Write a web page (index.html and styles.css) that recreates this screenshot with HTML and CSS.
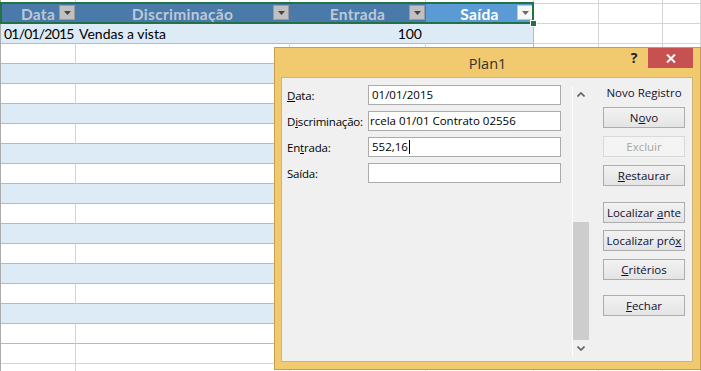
FILE: index.html
```html
<!DOCTYPE html>
<html lang="pt">
<head>
<meta charset="utf-8">
<title>Plan1</title>
<link rel="stylesheet" href="styles.css">
</head>
<body>
<div class="sheet">
  <div class="row strip"><div class="c"></div><div class="c"></div><div class="c"></div><div class="c"></div><div class="c"></div><div class="c"></div><div class="c"></div></div>
  <div class="row head">
    <div class="c h"><span class="ht">Data</span><span class="dd"><svg width="7" height="4" viewBox="0 0 7 4"><polygon points="0,0 7,0 3.5,4"/></svg></span></div>
    <div class="c h"><span class="ht">Discriminação</span><span class="dd"><svg width="7" height="4" viewBox="0 0 7 4"><polygon points="0,0 7,0 3.5,4"/></svg></span></div>
    <div class="c h"><span class="ht">Entrada</span><span class="dd"><svg width="7" height="4" viewBox="0 0 7 4"><polygon points="0,0 7,0 3.5,4"/></svg></span></div>
    <div class="c h act"><span class="ht">Saída</span><span class="dd"><svg width="7" height="4" viewBox="0 0 7 4"><polygon points="0,0 7,0 3.5,4"/></svg></span></div>
    <div class="c"></div><div class="c"></div><div class="c"></div>
  </div>
  <div class="row tb band"><div class="c txt date">01/01/2015</div><div class="c txt">Vendas a vista</div><div class="c txt num">100</div><div class="c"></div><div class="c"></div><div class="c"></div><div class="c"></div></div>
  <div class="row tb"><div class="c"></div><div class="c"></div><div class="c"></div><div class="c"></div><div class="c"></div><div class="c"></div><div class="c"></div></div>
  <div class="row tb band"><div class="c"></div><div class="c"></div><div class="c"></div><div class="c"></div><div class="c"></div><div class="c"></div><div class="c"></div></div>
  <div class="row tb"><div class="c"></div><div class="c"></div><div class="c"></div><div class="c"></div><div class="c"></div><div class="c"></div><div class="c"></div></div>
  <div class="row tb band"><div class="c"></div><div class="c"></div><div class="c"></div><div class="c"></div><div class="c"></div><div class="c"></div><div class="c"></div></div>
  <div class="row tb"><div class="c"></div><div class="c"></div><div class="c"></div><div class="c"></div><div class="c"></div><div class="c"></div><div class="c"></div></div>
  <div class="row tb band"><div class="c"></div><div class="c"></div><div class="c"></div><div class="c"></div><div class="c"></div><div class="c"></div><div class="c"></div></div>
  <div class="row tb"><div class="c"></div><div class="c"></div><div class="c"></div><div class="c"></div><div class="c"></div><div class="c"></div><div class="c"></div></div>
  <div class="row tb band"><div class="c"></div><div class="c"></div><div class="c"></div><div class="c"></div><div class="c"></div><div class="c"></div><div class="c"></div></div>
  <div class="row tb"><div class="c"></div><div class="c"></div><div class="c"></div><div class="c"></div><div class="c"></div><div class="c"></div><div class="c"></div></div>
  <div class="row tb band"><div class="c"></div><div class="c"></div><div class="c"></div><div class="c"></div><div class="c"></div><div class="c"></div><div class="c"></div></div>
  <div class="row tb"><div class="c"></div><div class="c"></div><div class="c"></div><div class="c"></div><div class="c"></div><div class="c"></div><div class="c"></div></div>
  <div class="row tb band"><div class="c"></div><div class="c"></div><div class="c"></div><div class="c"></div><div class="c"></div><div class="c"></div><div class="c"></div></div>
  <div class="row tb"><div class="c"></div><div class="c"></div><div class="c"></div><div class="c"></div><div class="c"></div><div class="c"></div><div class="c"></div></div>
  <div class="row tb band"><div class="c"></div><div class="c"></div><div class="c"></div><div class="c"></div><div class="c"></div><div class="c"></div><div class="c"></div></div>
  <div class="row tb"><div class="c"></div><div class="c"></div><div class="c"></div><div class="c"></div><div class="c"></div><div class="c"></div><div class="c"></div></div>
  <div class="row"><div class="c"></div><div class="c"></div><div class="c"></div><div class="c"></div><div class="c"></div><div class="c"></div><div class="c"></div></div>
  <div class="row"><div class="c"></div><div class="c"></div><div class="c"></div><div class="c"></div><div class="c"></div><div class="c"></div><div class="c"></div></div>
</div>

<div class="selection"></div>
<div class="handle"></div>

<div class="dialog">
  <div class="titlebar">
    <span class="title">Plan1</span>
    <div class="tools">
      <span class="help">?</span>
      <span class="close"><svg width="10" height="9" viewBox="0 0 10 9"><path d="M1 0.5 L9 8.5 M9 0.5 L1 8.5" stroke="#fff" stroke-width="2" fill="none"/></svg></span>
    </div>
  </div>
  <div class="panel">
    <div class="fields">
      <div class="field"><span class="lbl"><u>D</u>ata:</span><div class="inp">01/01/2015</div></div>
      <div class="field"><span class="lbl">D<u>i</u>scriminação:</span><div class="inp shift">rcela 01/01 Contrato 02556</div></div>
      <div class="field"><span class="lbl">En<u>t</u>rada:</span><div class="inp">552,16<span class="caret"></span></div></div>
      <div class="field"><span class="lbl">Saída:</span><div class="inp"></div></div>
    </div>
    <div class="scroll">
      <div class="arrow"><svg width="8" height="5" viewBox="0 0 8 5"><path d="M0.5 4.5 L4 1 L7.5 4.5" stroke="#606060" stroke-width="1.6" fill="none"/></svg></div>
      <div class="track"><div class="thumb"></div></div>
      <div class="arrow"><svg width="8" height="5" viewBox="0 0 8 5"><path d="M0.5 0.5 L4 4 L7.5 0.5" stroke="#606060" stroke-width="1.6" fill="none"/></svg></div>
    </div>
    <div class="btns">
      <div class="rec">Novo Registro</div>
      <div class="btn b-novo">N<u>o</u>vo</div>
      <div class="btn off b-gap">Excluir</div>
      <div class="btn b-gap"><u>R</u>estaurar</div>
      <div class="btn b-group">Localizar <u>a</u>nte</div>
      <div class="btn b-gap7">Localizar pró<u>x</u></div>
      <div class="btn b-gap"><u>C</u>ritérios</div>
      <div class="btn b-close"><u>F</u>echar</div>
    </div>
  </div>
</div>
</body>
</html>
```

FILE: styles.css
```css
html, body {
  margin: 0;
  padding: 0;
  width: 701px;
  height: 371px;
  overflow: hidden;
  background: #ffffff;
}

body {
  position: relative;
  font-family: Lato, "Liberation Sans", sans-serif;
}

.sheet {
  border-left: 1px solid #ababab;
}

.row {
  display: grid;
  grid-template-columns: 75px 214px 136px 108px 65px 64px 1fr;
  height: 20px;
}

.row.strip {
  height: 4px;
}

.c {
  box-sizing: border-box;
  border-right: 1px solid #d4d4d4;
  border-bottom: 1px solid #d4d4d4;
  min-width: 0;
}

/* header */
.h {
  display: grid;
  align-items: center;
  background: #497aa9;
  border-right-color: #497aa9;
  border-bottom-color: #497aa9;
}

.h > * {
  grid-area: 1 / 1;
}

.ht {
  justify-self: center;
  font-weight: bold;
  font-size: 15.5px;
  letter-spacing: 0.3px;
  color: #bcc8d8;
  line-height: 18px;
}

.dd {
  justify-self: end;
  align-self: start;
  margin-top: 1px;
  width: 16px;
  height: 15px;
  box-sizing: border-box;
  border: 1px solid #9a9a9a;
  background: #c0c0c0;
  display: flex;
  align-items: center;
  justify-content: center;
}

.dd svg {
  fill: #454545;
}

.h.act {
  background: #5b9bd5;
  border-right-color: #5b9bd5;
  border-bottom-color: #5b9bd5;
}

.h.act .ht {
  color: #ffffff;
}

.h.act .dd {
  background: #f7f7f7;
  border-color: #c6c6c6;
}

.h.act .dd svg {
  fill: #6a6a6a;
}

/* table body */
.tb .c:nth-child(-n+4) {
  border-bottom-color: #9bc2e6;
}

.tb .c:nth-child(4) {
  border-right-color: #9bc2e6;
}

.band .c:nth-child(-n+3) {
  background: #ddebf7;
  border-right-color: #ddebf7;
}

.band .c:nth-child(4) {
  background: #ddebf7;
}

.txt {
  font-size: 14px;
  line-height: 19px;
  color: #000;
  padding-left: 3px;
  white-space: nowrap;
  overflow: hidden;
}

.date {
  letter-spacing: -0.8px;
}

.num {
  text-align: right;
  padding-right: 3px;
}

/* selection overlay */
.selection {
  position: absolute;
  left: 0;
  top: 2px;
  width: 534px;
  height: 22px;
  box-sizing: border-box;
  border: 2px solid #217346;
}

.handle {
  position: absolute;
  left: 530px;
  top: 20px;
  width: 5px;
  height: 5px;
  background: #217346;
  border: 1px solid #ffffff;
}

/* dialog */
.dialog {
  position: absolute;
  left: 274px;
  top: 47px;
  width: 427px;
  height: 323px;
  box-sizing: border-box;
  border: 1px solid #c59e4f;
  background: #f1c96e;
  padding: 0 7px 7px 6px;
  display: flex;
  flex-direction: column;
  font-family: "Open Sans", "Noto Sans", sans-serif;
  font-size: 11.5px;
  color: #000;
}

.titlebar {
  height: 29px;
  display: grid;
  grid-template-columns: 1fr;
  margin-right: -7px;
  margin-left: -6px;
}

.titlebar > * {
  grid-area: 1 / 1;
}

.title {
  justify-self: center;
  align-self: center;
  font-size: 14.5px;
  color: #333333;
  margin-top: 1px;
}

.tools {
  justify-self: end;
  align-self: start;
  display: flex;
  align-items: center;
  gap: 6px;
  margin-right: 7px;
}

.help {
  width: 16px;
  text-align: center;
  font-weight: bold;
  font-size: 14px;
  line-height: 20px;
  color: #222222;
}

.close {
  width: 45px;
  height: 20px;
  background: #c75050;
  display: flex;
  align-items: center;
  justify-content: center;
}

.panel {
  flex: 1;
  box-sizing: border-box;
  border: 1px solid #cbb57c;
  background: #f0f0f0;
  display: grid;
  grid-template-columns: 290px 17px 103px;
}

.fields {
  padding: 7px 0 0 5px;
  display: flex;
  flex-direction: column;
  gap: 6px;
}

.field {
  display: grid;
  grid-template-columns: 81px 193px;
  align-items: center;
  height: 20px;
}

.lbl {
  white-space: nowrap;
  color: #000;
  letter-spacing: -0.2px;
}

.inp {
  box-sizing: border-box;
  height: 20px;
  border: 1px solid #ababab;
  background: #ffffff;
  padding-left: 3px;
  line-height: 18px;
  white-space: nowrap;
  overflow: hidden;
  display: flex;
  align-items: center;
}

.inp.shift {
  padding-left: 1px;
}

.caret {
  display: inline-block;
  width: 1px;
  height: 14px;
  background: #000;
  margin-left: 1px;
}

.scroll {
  margin: 8px 0 4px 0;
  border-left: 1px solid #ffffff;
  display: flex;
  flex-direction: column;
}

.arrow {
  height: 17px;
  display: flex;
  align-items: center;
  justify-content: center;
}

.track {
  flex: 1;
  display: flex;
  flex-direction: column;
}

.thumb {
  margin-top: auto;
  height: 118px;
  background: #cdcdcd;
}

.btns {
  padding: 7px 0 0 14px;
  width: 82px;
  display: flex;
  flex-direction: column;
}

.rec {
  text-align: center;
  line-height: 16px;
  height: 16px;
  white-space: nowrap;
  color: #101030;
}

.btn {
  box-sizing: border-box;
  height: 21px;
  border: 1px solid #adadad;
  background: linear-gradient(#f2f2f2, #e4e4e4);
  text-align: center;
  line-height: 19px;
  white-space: nowrap;
  color: #101030;
}

.btn.off {
  border-color: #d9d9d9;
  background: #f4f4f4;
  color: #a6a6a6;
}

.b-novo { margin-top: 6px; }
.b-gap { margin-top: 8px; }
.b-gap7 { margin-top: 7px; }
.b-group { margin-top: 16px; }
.b-close { margin-top: 15px; }
```
